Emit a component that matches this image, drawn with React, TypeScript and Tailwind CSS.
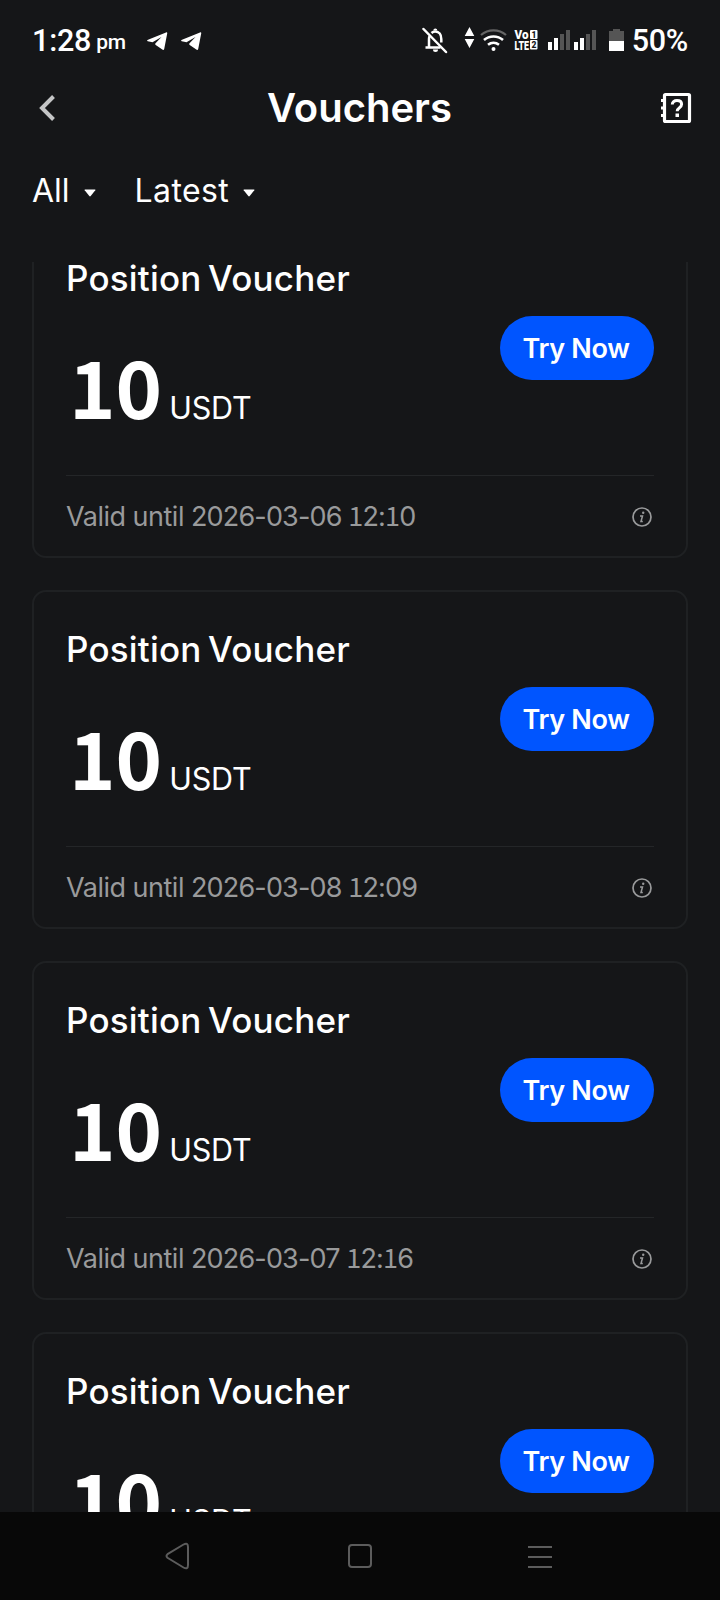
import React from "react";

const vouchers = [
  { title: "Position Voucher", amount: "10", unit: "USDT", expires: "2026-03-06 12:10" },
  { title: "Position Voucher", amount: "10", unit: "USDT", expires: "2026-03-08 12:09" },
  { title: "Position Voucher", amount: "10", unit: "USDT", expires: "2026-03-07 12:16" },
  { title: "Position Voucher", amount: "10", unit: "USDT", expires: "2026-03-07 12:15" },
];

function Telegram() {
  return (
    <svg width="22" height="19" viewBox="0 0 22 19" fill="#fff">
      <path d="M19 .4 1 7.700C-.2 8.200-.2 9 .8 9.300L5.500 10.300 14.500 5 8.500 11.200c-.5.600-.4 1.200.2 1.700l6.600 4.700c.9.600 1.700.3 1.900-.7L20.200 1.400C20.400.500 19.900 0 19 .4Z" />
    </svg>
  );
}

function StatusIcons() {
  return (
    <svg width="188" height="28" viewBox="0 -1.5 188 28" fill="none">
      <g stroke="#fff" strokeWidth="2.500">
        <path d="M1.500 1.500 24 24.500" strokeLinecap="round" />
        <path d="M7 20V11.500c0-1.200.2-2 .6-3M9.500 5.500c1-.9 2.300-1.500 3.800-1.500 3.700 0 6 3.200 6 7.500V15M3.500 20h15" />
      </g>
      <path d="M11.300 3a2 2 0 0 1 4 0ZM11 22h5a2.500 2.500 0 0 1-5 0Z" fill="#fff" />
      <path d="M47.500-.5l4.800 9h-9.600ZM47.500 20.500l4.800-9h-9.600Z" fill="#fff" />
      <path d="M59 7.500a19 19 0 0 1 25 0" stroke="#666" strokeWidth="2.200" />
      <path d="M62 12.500a14.500 14.500 0 0 1 19 0M66 17.300a9 9 0 0 1 11 0" stroke="#fff" strokeWidth="2.600" />
      <circle cx="71.500" cy="21.500" r="2" fill="#fff" />
      <g fill="#fff" fontFamily="Roboto" fontWeight="900" fontSize="12.500">
        <text x="92.500" y="11.500" textLength="14" lengthAdjust="spacingAndGlyphs">Vo</text>
        <text x="92.500" y="22" textLength="14.500" lengthAdjust="spacingAndGlyphs">LTE</text>
        <rect x="108" y="2.500" width="7.500" height="9" rx="1" />
        <rect x="108" y="12.500" width="7.500" height="9.500" rx="1" />
      </g>
      <g fill="#151618" fontFamily="Roboto" fontWeight="900" fontSize="8.500">
        <text x="109.400" y="10">1</text>
        <text x="109.400" y="20.300">2</text>
      </g>
      <path d="M126 14.500h4v8h-4ZM132 10.500h4v12h-4ZM152 14.500h4v8h-4ZM158 10.500h4v12h-4Z" fill="#fff" />
      <path d="M138 6.500h4v16h-4ZM144 2.500h4v20h-4ZM164 6.500h4v16h-4ZM170 2.500h4v20h-4Z" fill="#555" />
    </svg>
  );
}

function HelpBook() {
  return (
    <svg width="32" height="32" viewBox="0 0 32 32" fill="none">
      <rect x="4.500" y="2.500" width="25" height="27" rx="1" stroke="#fff" strokeWidth="3.200" />
      <path d="M1 7h4v3H1ZM1 14.500h4v3H1ZM1 22h4v3H1Z" fill="#fff" />
      <path d="M12.300 12.500c0-2.400 1.900-4 4.700-4 2.800 0 4.600 1.500 4.600 3.800 0 1.600-.7 2.500-2.400 3.600-1.500 1-2 1.600-2 3.400" stroke="#fff" strokeWidth="3" />
      <rect x="15.500" y="21.500" width="3.500" height="3.500" fill="#fff" />
    </svg>
  );
}

function Caret() {
  return (
    <svg width="12" height="8" viewBox="0 0 12 8" fill="#fff">
      <path d="M1 .5h10c.5 0 .6.3.3.700L6.700 7c-.4.500-1 .500-1.400 0L.700 1.200C.400.800.500.500 1 .5Z" />
    </svg>
  );
}

function Digits({ text }: { text: string }) {
  return (
    <>
      {text.split("").map((c, i) =>
        c === "1" ? (
          <span key={i} className="font-['Noto_Sans_CJK_SC',sans-serif]">1</span>
        ) : (
          <React.Fragment key={i}>{c}</React.Fragment>
        )
      )}
    </>
  );
}

function VoucherCard({ v }: { v: (typeof vouchers)[number] }) {
  return (
    <article className="flex h-[339px] shrink-0 flex-col rounded-[14px] border-2 border-[#1f2123] px-8">
      <div className="flex h-[254px] items-start justify-between">
        <div className="flex flex-col">
          <h2 className="mt-[35px] h-[44px] text-[35px] leading-[44px] font-medium tracking-[0.2px] whitespace-nowrap [word-spacing:-3px]">{v.title}</h2>
          <div className="mt-[45px] flex h-[80px] items-baseline leading-[80px]">
            <span className="ml-[3px] font-['Noto_Sans_CJK_SC',sans-serif] text-[79px] font-bold">{v.amount}</span>
            <span className="ml-[7px] text-[30.500px] tracking-[-0.2px]">{v.unit}</span>
          </div>
        </div>
        <button className="mt-[95px] h-16 w-[154px] rounded-full bg-[#0055ff] pt-0.5 pr-0.5 text-[27px] font-semibold tracking-[-0.3px] whitespace-nowrap">Try Now</button>
      </div>
      <div className="flex h-[81px] items-center justify-between border-t border-[#242628] text-[27px] text-[#999a9b]">
        <p className="mb-0.5 flex h-8 items-baseline leading-8 whitespace-nowrap">
          <span className="tracking-[-0.5px]">Valid until</span>
          <span className="ml-[7px] tracking-[-0.85px]">
            <Digits text={v.expires} />
          </span>
        </p>
        <svg width="20" height="20" viewBox="0 0 20 20" fill="none" className="mt-0.5 mr-[2px]">
          <circle cx="10" cy="10" r="9" stroke="#999a9b" strokeWidth="1.700" />
          <path d="M8 9h2.500L9 14.500h1.800" stroke="#999a9b" strokeWidth="1.500" />
          <circle cx="11.200" cy="5.800" r="1.200" fill="#999a9b" />
        </svg>
      </div>
    </article>
  );
}

export default function App() {
  return (
    <div className="flex h-[1600px] w-[720px] flex-col overflow-hidden bg-[#151618] font-['Inter',sans-serif] text-white">
      <div className="flex h-[72px] shrink-0 items-center pt-2 pr-8 pl-8 font-['Roboto',sans-serif] font-medium">
        <span className="pt-px text-[30.500px] tracking-[-0.2px]">1:28</span>
        <span className="ml-[5px] pt-[6px] text-[21px] tracking-[-0.3px]">pm</span>
        <span className="ml-[21px] flex gap-3 pt-0.5"><Telegram /><Telegram /></span>
        <span className="ml-auto flex items-center">
          <StatusIcons />
          <svg width="15" height="22" viewBox="0 0 15 22" className="ml-[-1px]">
            <path d="M4 0h7v2h4v10H0V2h4Z" fill="#555" />
            <path d="M0 12h15v10H0Z" fill="#fff" />
          </svg>
          <span className="ml-[8px] pt-px text-[30.500px] tracking-[-0.300px]">50%</span>
        </span>
      </div>
      <header className="flex h-[72px] shrink-0 items-center justify-between pr-[28px] pl-[38px]">
        <svg width="20" height="28" viewBox="0 0 20 28" fill="none">
          <path d="M15.500 2.500 4 14l11.500 11.500" stroke="#c4c5c6" strokeWidth="4" />
        </svg>
        <h1 className="pl-px text-[40px] leading-none font-semibold">Vouchers</h1>
        <HelpBook />
      </header>
      <div className="flex h-[118px] shrink-0 items-start pt-[26px] pl-8 text-[32px] leading-[42px]">
        <span>All</span>
        <span className="mt-[19px] ml-[14px]"><Caret /></span>
        <span className="ml-[39px] tracking-[0.4px]">Latest</span>
        <span className="mt-[19px] ml-[14px]"><Caret /></span>
      </div>
      <main className="h-[1250px] shrink-0 overflow-hidden px-8">
        <div className="mt-[-43px] flex flex-col gap-8">
          {vouchers.map((v, i) => <VoucherCard key={i} v={v} />)}
        </div>
      </main>
      <nav className="flex h-[88px] shrink-0 items-center bg-[#080808] pl-[164px]">
        <svg width="26" height="28" viewBox="0 0 26 28" fill="none" stroke="#5c5c5c" strokeWidth="2">
          <path d="M3.500 12.200 19.500 2.500Q24 0 24 5v18q0 5-4.500 2.500L3.500 15.800Q1.500 14 3.500 12.200Z" />
        </svg>
        <span className="ml-[158px] h-6 w-6 rounded border-2 border-[#5c5c5c]" />
        <svg className="ml-[156px]" width="24" height="24" viewBox="0 0 24 24" stroke="#5c5c5c" strokeWidth="2">
          <path d="M0 3h24M0 13h24M0 23h24" />
        </svg>
      </nav>
    </div>
  );
}
